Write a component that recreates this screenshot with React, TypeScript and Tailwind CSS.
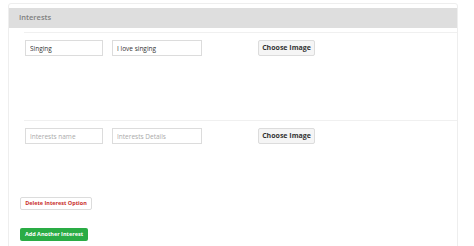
import React from "react";

function InterestRow({ name, details, tall }: { name?: string; details?: string; tall?: boolean }) {
  return (
    <div className={`${tall ? "h-[88px]" : "h-[77px]"} border-t border-[#f0f0f0] ml-[15px] pt-[7px]`}>
      <div className="flex items-center">
        <input
          className="w-[78px] h-[16px] ml-[1px] border border-[#dcdcdc] px-[4px] text-[6.5px] text-[#333] placeholder:text-[#aaa] outline-none"
          defaultValue={name}
          placeholder="Interests name"
        />
        <input
          className="w-[90px] h-[16px] ml-[9px] border border-[#dcdcdc] px-[4px] text-[6.5px] text-[#333] placeholder:text-[#aaa] outline-none"
          defaultValue={details}
          placeholder="Interests Details"
        />
        <button className="ml-[56px] w-[57px] h-[16px] bg-[#f5f5f5] border border-[#dcdcdc] rounded-[2px] text-[7px] font-bold text-[#333]">
          Choose Image
        </button>
      </div>
    </div>
  );
}

export default function App() {
  return (
    <div className="w-[474px] h-[246px] bg-white overflow-hidden pt-[3px] pl-[8px]" style={{ fontFamily: '"Open Sans", sans-serif' }}>
      <div className="w-[450px] h-[260px] border border-[#eeeeee] rounded-[3px] pt-[4px]">
        <div className="h-[20px] bg-[#dedede] flex items-center pl-[10px] text-[7.5px] font-semibold text-[#808080]">
          Interests
        </div>
        <div className="pt-[4px]">
          <InterestRow name="Singing" details="I love singing" tall />
          <InterestRow />
        </div>
        <div className="pl-[11px] flex flex-col items-start">
          <button className="w-[72px] h-[13px] bg-white border border-[#dcdcdc] rounded-[2px] text-[5.5px] font-bold text-[#c9302c]">
            Delete Interest Option
          </button>
          <button className="mt-[18px] w-[68px] h-[13px] bg-[#2aac45] rounded-[2px] text-[5.5px] font-bold text-white">
            Add Another Interest
          </button>
        </div>
      </div>
    </div>
  );
}
